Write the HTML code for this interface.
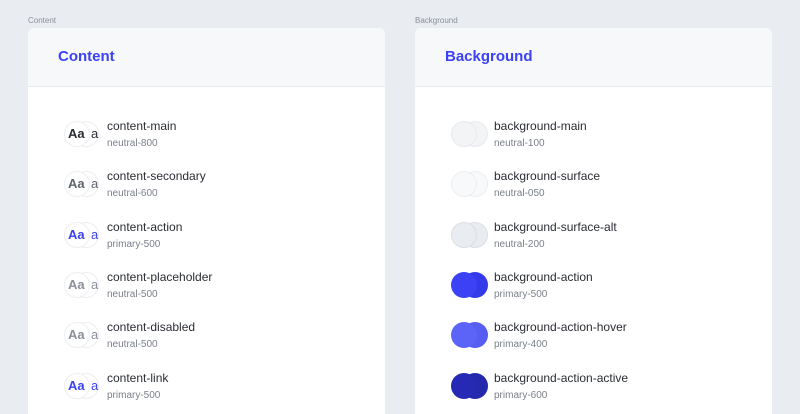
<!DOCTYPE html>
<html><head><style>
*{margin:0;padding:0;box-sizing:border-box}
html,body{width:800px;height:414px;overflow:hidden}
body{background:#e9ecf0;font-family:"Liberation Sans",sans-serif;position:relative}
.lbl{position:absolute;top:16px;font-size:8px;color:#8a8f98}
.card{position:absolute;top:28px;width:357px;height:386px;background:#fff;border-radius:6px 6px 0 0;overflow:hidden}
.hd{height:59px;background:#f7f8fa;border-bottom:1px solid #e6e9ee;padding:20px 0 0 30px;font-size:15px;font-weight:bold;color:#3b41f5}
.row{position:absolute;left:36px;height:40px}
.c{position:absolute;width:26px;height:26px;border-radius:50%;top:0px}
.t1{position:absolute;left:43px;top:-2px;font-size:12px;color:#2a2d33;white-space:nowrap}
.t2{position:absolute;left:43px;top:17px;font-size:10px;color:#7a7f88;white-space:nowrap}
.aa{position:absolute;top:5px;font-size:13px;font-weight:bold}
.ol{border:1px solid #eceef1;background:#fff}
</style></head><body>
<div class="lbl" style="left:28px">Content</div>
<div class="lbl" style="left:415px">Background</div>
<div class="card" style="left:28px"><div class="hd">Content</div></div>
<div class="card" style="left:415px"><div class="hd">Background</div></div>
<div style="position:absolute;left:28px;top:28px">
<div class="row" style="top:93px"><div class="c ol" style="left:9px"></div><div class="c ol" style="left:0"></div><span class="aa" style="left:4px;color:#2a2d33">Aa</span><span class="aa" style="left:27px;color:#2a2d33;font-weight:normal">a</span><div class="t1">content-main</div><div class="t2">neutral-800</div></div>
<div class="row" style="top:143px"><div class="c ol" style="left:9px"></div><div class="c ol" style="left:0"></div><span class="aa" style="left:4px;color:#5f646c">Aa</span><span class="aa" style="left:27px;color:#5f646c;font-weight:normal">a</span><div class="t1">content-secondary</div><div class="t2">neutral-600</div></div>
<div class="row" style="top:194px"><div class="c ol" style="left:9px"></div><div class="c ol" style="left:0"></div><span class="aa" style="left:4px;color:#3b41f5">Aa</span><span class="aa" style="left:27px;color:#3b41f5;font-weight:normal">a</span><div class="t1">content-action</div><div class="t2">primary-500</div></div>
<div class="row" style="top:244px"><div class="c ol" style="left:9px"></div><div class="c ol" style="left:0"></div><span class="aa" style="left:4px;color:#8a8f98">Aa</span><span class="aa" style="left:27px;color:#8a8f98;font-weight:normal">a</span><div class="t1">content-placeholder</div><div class="t2">neutral-500</div></div>
<div class="row" style="top:294px"><div class="c ol" style="left:9px"></div><div class="c ol" style="left:0"></div><span class="aa" style="left:4px;color:#8a8f98">Aa</span><span class="aa" style="left:27px;color:#8a8f98;font-weight:normal">a</span><div class="t1">content-disabled</div><div class="t2">neutral-500</div></div>
<div class="row" style="top:345px"><div class="c ol" style="left:9px"></div><div class="c ol" style="left:0"></div><span class="aa" style="left:4px;color:#3b41f5">Aa</span><span class="aa" style="left:27px;color:#3b41f5;font-weight:normal">a</span><div class="t1">content-link</div><div class="t2">primary-500</div></div>
</div>
<div style="position:absolute;left:415px;top:28px">
<div class="row" style="top:93px"><div class="c" style="left:11px;background:#f3f4f6;border:1px solid #e8eaee"></div><div class="c" style="left:0;background:#f3f4f6;border:1px solid #e8eaee"></div><div class="t1">background-main</div><div class="t2">neutral-100</div></div>
<div class="row" style="top:143px"><div class="c" style="left:11px;background:#f8f9fa;border:1px solid #eceef1"></div><div class="c" style="left:0;background:#f8f9fa;border:1px solid #eceef1"></div><div class="t1">background-surface</div><div class="t2">neutral-050</div></div>
<div class="row" style="top:194px"><div class="c" style="left:11px;background:#e9ecf0;border:1px solid #dcdfe4"></div><div class="c" style="left:0;background:#e9ecf0;border:1px solid #dcdfe4"></div><div class="t1">background-surface-alt</div><div class="t2">neutral-200</div></div>
<div class="row" style="top:244px"><div class="c" style="left:11px;background:#3439ea"></div><div class="c" style="left:0;background:#3b41f5"></div><div class="t1">background-action</div><div class="t2">primary-500</div></div>
<div class="row" style="top:294px"><div class="c" style="left:11px;background:#565df0"></div><div class="c" style="left:0;background:#5c63f7"></div><div class="t1">background-action-hover</div><div class="t2">primary-400</div></div>
<div class="row" style="top:345px"><div class="c" style="left:11px;background:#2328ad"></div><div class="c" style="left:0;background:#2529b4"></div><div class="t1">background-action-active</div><div class="t2">primary-600</div></div>
</div>
</body></html>
